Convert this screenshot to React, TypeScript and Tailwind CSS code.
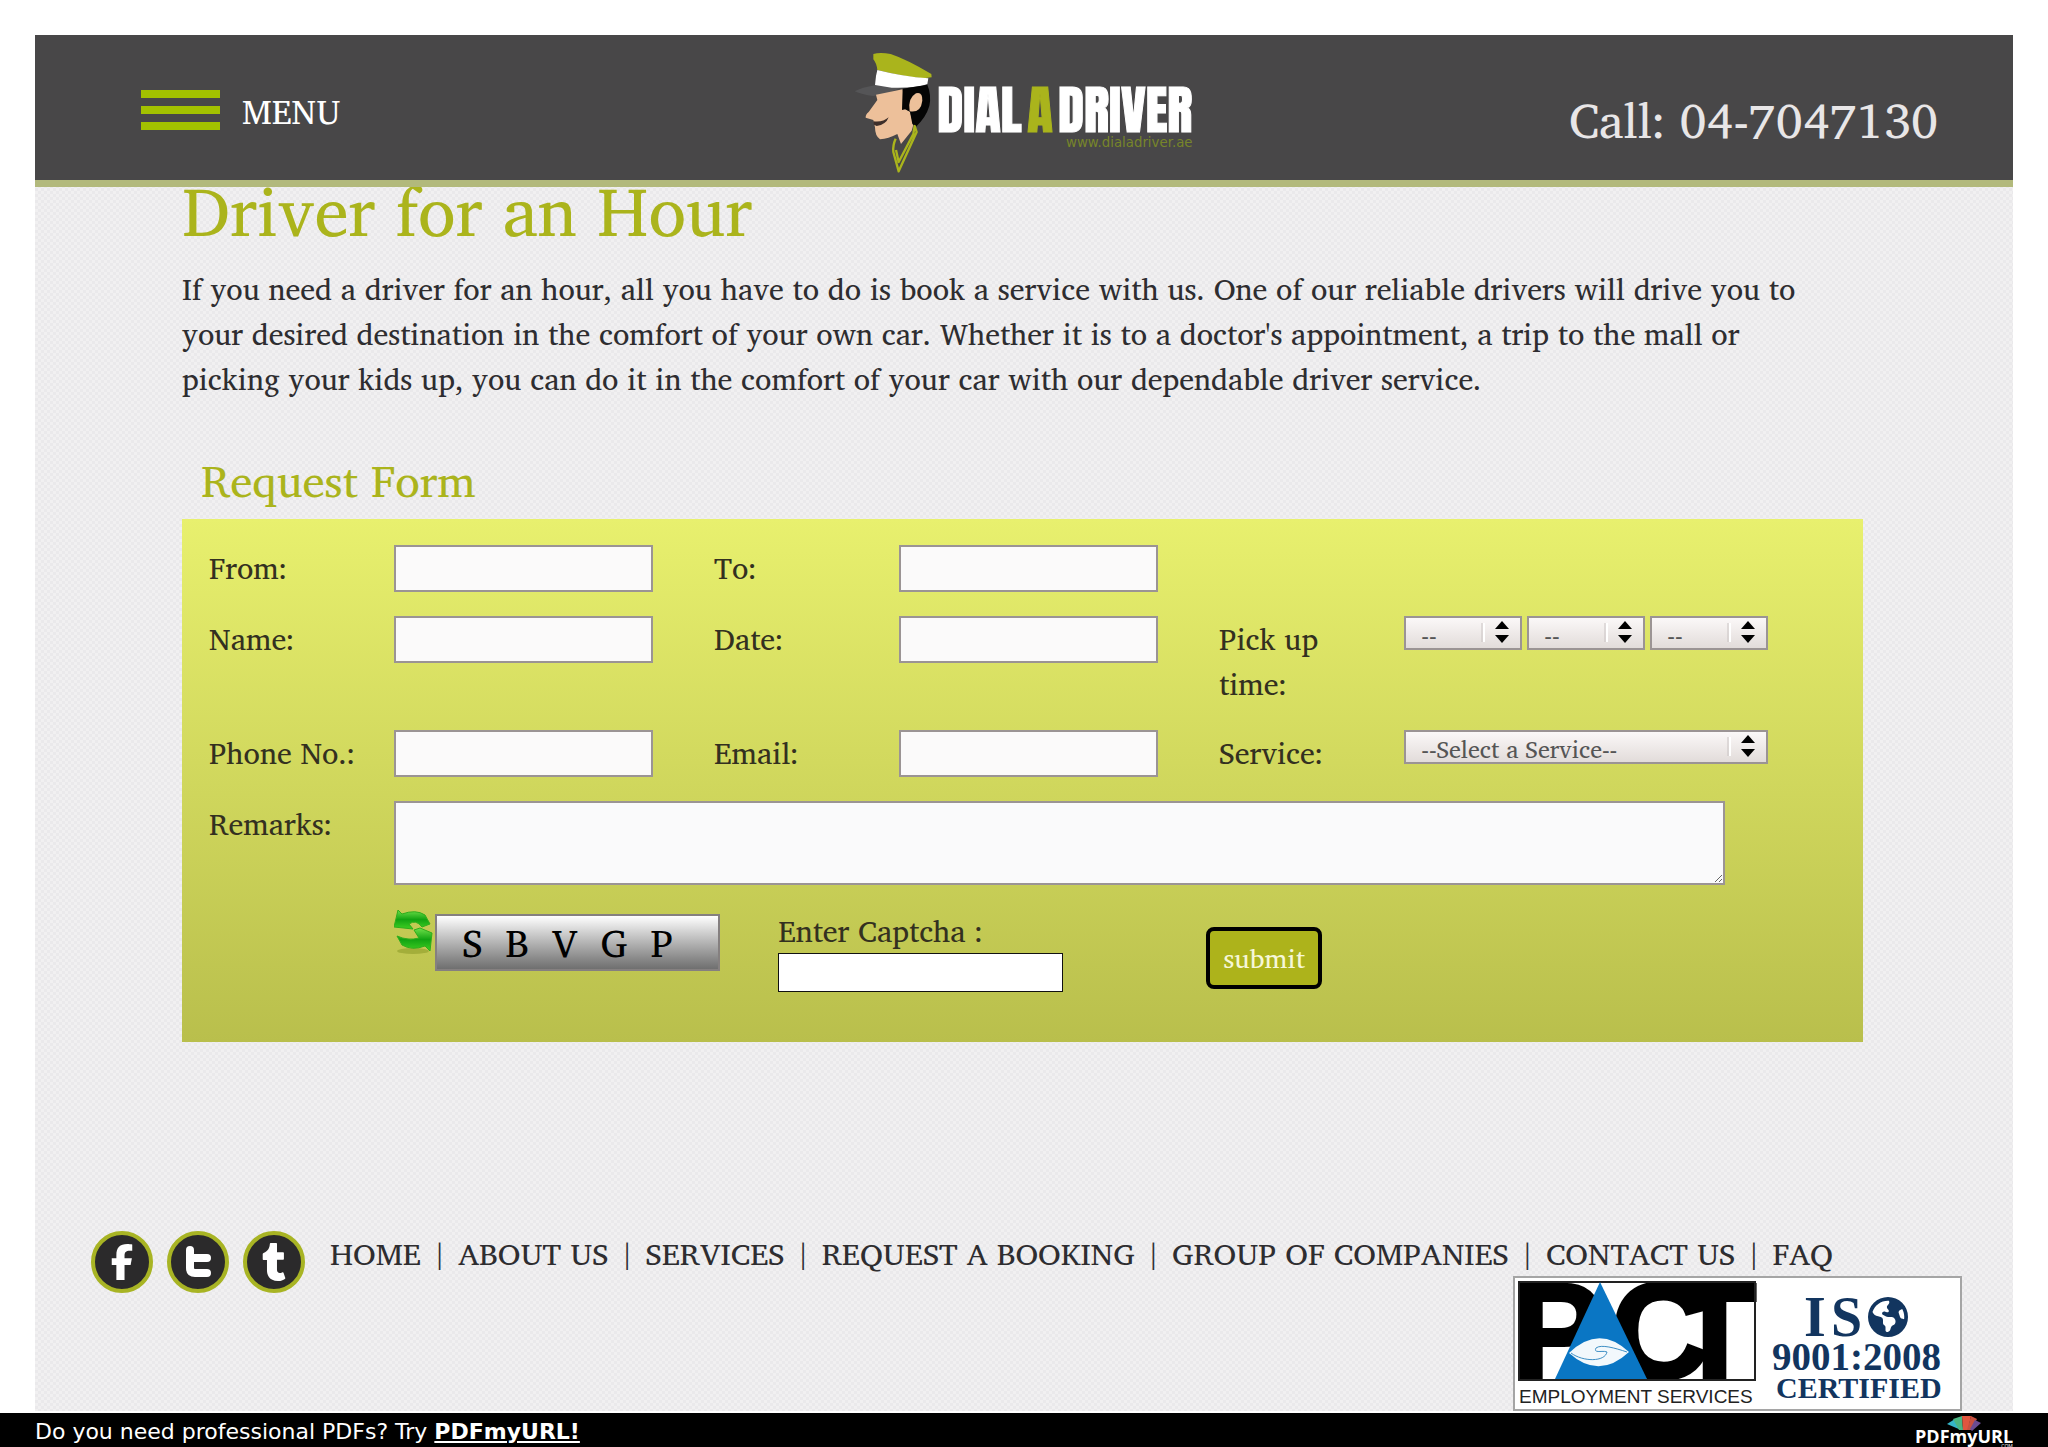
import { FaFacebookF, FaTumblr, FaEarthAmericas } from "react-icons/fa6"

const nav_links = ["HOME", "ABOUT US", "SERVICES", "REQUEST A BOOKING", "GROUP OF COMPANIES", "CONTACT US", "FAQ"]

const label_style = "text-[30px] leading-[45px]"
const input_style = "h-[47px] w-[259px] border-2 border-[#9b9494] bg-[#fbfafa] px-2 text-2xl"

function Logo() {
  return (
    <svg viewBox="84 15 1056 435" className="h-[145px] w-[352px]" role="img" aria-label="Dial A Driver">
      <path d="M104 184Q125 172 165 166L248 170Q205 192 160 198Q125 194 104 184Z" fill="#555557" />
      <path d="M160 72Q180 66 212 72Q260 88 334 132L335 142L310 145Q250 140 172 120Q170 100 160 88Z" fill="#aab41c" />
      <path d="M172 120Q250 140 325 145L322 162Q290 175 215 173L165 165L168 138Z" fill="#fff" />
      <path d="M168 194L248 178L256 238L270 245L280 284L275 302L243 342L232 312Q205 326 180 328Q165 318 165 292L160 270L137 263Q136 254 146 246L172 210Z" fill="#edc09a" />
      <path d="M248 176L322 164Q335 195 328 228Q318 262 288 290L277 282L270 245L256 238L246 240Z" fill="#050505" />
      <path d="M269 244Q262 205 288 190Q308 184 307 212Q302 250 269 244Z" fill="#edc09a" />
      <path d="M160 274Q188 278 206 262Q198 284 170 288L162 284Z" fill="#3e2f2a" />
      <path d="M227 326Q218 345 220 366L236 424L290 306L284 288L280 312L236 396L228 360" fill="none" stroke="#aab41c" strokeWidth="7" strokeLinejoin="round" />
      <g className="font-['Anton',sans-serif]" fontSize="158" fill="#fff" stroke="#fff" strokeWidth="3">
        <text x="352" y="305">DIAL</text>
        <text x="622" y="305" fill="#aab41c" stroke="#aab41c">A</text>
        <text x="714" y="305">DRIVER</text>
      </g>
      <text x="738" y="350" fontSize="40" className="font-['DejaVu_Sans',sans-serif]" fill="#77852a">www.dialadriver.ae</text>
    </svg>
  )
}

function Badge() {
  return (
    <svg viewBox="0 0 449 135" className="h-[135px] w-[449px]" role="img" aria-label="Pact Employment Services, ISO 9001:2008 certified">
      <rect x="1" y="1" width="447" height="133" fill="#fff" stroke="#a5a5a5" strokeWidth="2" />
      <g className="font-['Liberation_Sans',sans-serif] font-bold" fontSize="136" fill="#000" stroke="#000" strokeWidth="4">
        <text x="-1" y="102">P</text>
        <text x="98" y="102">C</text>
        <text x="160" y="102">T</text>
      </g>
      <rect x="6" y="6" width="236" height="98" fill="none" stroke="#222" strokeWidth="2" />
      <path d="M87 6L134 103H42Z" fill="#0a76c4" />
      <path d="M56 77Q86 48 116 76Q86 104 56 77Z" fill="#f2f8fc" />
      <path d="M58 77C70 86 92 86 94 76C90 74 80 78 83 72C88 68 102 72 114 76" fill="none" stroke="#3d8ec4" />
      <text x="6" y="127" fontSize="19" className="font-['Liberation_Sans',sans-serif]" fill="#222">EMPLOYMENT SERVICES</text>
      <g className="font-['Liberation_Serif',serif] font-bold" fill="#12355f">
        <text x="291" y="60" fontSize="56">I</text>
        <text x="318" y="60" fontSize="56">S</text>
        <text x="259" y="94" fontSize="39">9001:2008</text>
        <text x="263" y="122" fontSize="30">CERTIFIED</text>
      </g>
      <FaEarthAmericas x="355" y="21" size="40" color="#12355f" />
    </svg>
  )
}

function PdfLogo() {
  return (
    <svg viewBox="0 0 98 35" className="h-[35px] w-[98px]" role="img" aria-label="PDFmyURL.com">
      <path d="M32 10L40 5L46 16Z" fill="#35b5c8" />
      <path d="M38 5L47 2L48 16H44Z" fill="#4bb582" />
      <path d="M47 2H56L53 16H48Z" fill="#e0563f" />
      <path d="M56 2L62 5L56 16H52Z" fill="#c9503f" />
      <path d="M60 6L66 9L57 17L55 15Z" fill="#6a4c93" />
      <text x="0" y="29" fontSize="18" className="font-['Open_Sans',sans-serif] font-bold" fill="#fff">PDFmyURL</text>
      <text x="85" y="34" fontSize="5" className="font-['Open_Sans',sans-serif]" fill="#fff">.COM</text>
    </svg>
  )
}

interface select_props {
  id: string,
  label?: string,
  text: string,
  width: string,
}

function Select({ id, label, text, width }: select_props) {
  return (
    <div className={`relative h-[34px] ${width}`}>
      <select id={id} aria-label={label} className="block size-full appearance-none border-2 border-[#9b9494] bg-linear-to-b from-[#fbf8f8] to-[#e2dcda] pt-1 pl-[15px] text-[24px] leading-[26px] text-[#555]">
        <option>{text}</option>
      </select>
      <svg viewBox="0 0 28 24" className="pointer-events-none absolute top-1 right-[13px] h-6 w-7">
        <path d="M1 3V22" stroke="#c9c3c3" strokeWidth="1" />
        <path d="M3 3V22" stroke="#fff" strokeWidth="2" />
        <path d="M21 1L28 9H14ZM14 15H28L21 23Z" fill="#000" />
      </svg>
    </div>
  )
}

function Field({ id, label }: { id: string, label: string }) {
  return (
    <>
      <label htmlFor={id} className={label_style}>{label}</label>
      <input id={id} type="text" className={input_style} />
    </>
  )
}

function RequestForm() {
  return (
    <form className="mt-[14px] grid grid-cols-[44fr_76fr_44fr_76fr_44fr_109fr] items-start gap-y-6 bg-linear-to-b from-[#e8f06e] to-[#b9bf4c] pt-[26px] pb-[50px] pl-[27px] text-[#333020]">
      <Field id="from" label="From:" />
      <Field id="to" label="To:" />
      <div className="col-span-2"></div>
      <Field id="name" label="Name:" />
      <Field id="date" label="Date:" />
      <label htmlFor="hour" className={`${label_style} w-[120px]`}>Pick up time:</label>
      <div className="flex gap-[5px]">
        <Select id="hour" text="--" width="w-[118px]" />
        <Select id="minute" label="Minutes" text="--" width="w-[118px]" />
        <Select id="period" label="AM or PM" text="--" width="w-[118px]" />
      </div>
      <Field id="phone" label="Phone No.:" />
      <Field id="email" label="Email:" />
      <label htmlFor="service" className={label_style}>Service:</label>
      <Select id="service" text="--Select a Service--" width="w-[364px]" />
      <label htmlFor="remarks" className={label_style}>Remarks:</label>
      <div className="col-span-5 pr-[138px]">
        <textarea id="remarks" className="block h-[84px] w-full border-2 border-[#9b9494] bg-[#fafafb] px-2 text-2xl"></textarea>
      </div>
      <div className="col-span-5 col-start-2 flex items-start">
        <button type="button" aria-label="New code" className="w-[41px]">
          <svg viewBox="0 0 40 46" className="h-[46px] w-10">
            <defs>
              <linearGradient id="leaf" x1="0" y1="0" x2="0" y2="1">
                <stop offset="0" stopColor="#6fe04a" />
                <stop offset="0.5" stopColor="#12a312" />
                <stop offset="1" stopColor="#3fcf22" />
              </linearGradient>
            </defs>
            <ellipse cx="19" cy="42" rx="16" ry="3" fill="#8f9c2c" opacity="0.6" />
            <path d="M4 1L8 5Q22 0 31 6L36 15L28 18Q22 10 15 15L19 20L0 18Z" fill="url(#leaf)" stroke="#2fae1c" />
            <path d="M20 21L26 19L38 24L36 42L31 37Q18 42 8 36L3 27Q14 32 25 29Z" fill="url(#leaf)" stroke="#2fae1c" />
          </svg>
        </button>
        <div className="mt-[5px] h-[57px] w-[285px] border-2 border-[#858080] bg-linear-to-b from-white to-[#6f6f6f] pl-[25px] text-[39px] leading-[53px] whitespace-pre text-black">S  B  V  G  P</div>
        <div className="ml-[58px] flex flex-col">
          <label htmlFor="captcha" className="text-[30px] leading-[44px]">Enter Captcha :</label>
          <input id="captcha" type="text" className="h-[39px] w-[285px] border border-[#111] bg-white px-2 text-2xl" />
        </div>
        <button type="submit" className="mt-[18px] ml-[143px] h-[62px] w-[116px] rounded-lg border-4 border-black bg-[#adb31b] text-[27px] leading-[45px] text-[#f6f7d8]">submit</button>
      </div>
    </form>
  )
}

export default function App() {
  return (
    <div className="bg-white pt-[35px] font-['Charis_SIL','Liberation_Serif',serif] text-[#2e2d30]">
      <div className="mx-[35px] mb-0.5 bg-[repeating-conic-gradient(#eae9eb_0_25%,#f1f0f1_0_50%)] bg-[length:6px_6px]">
        <header className="relative z-10 grid grid-cols-[1fr_auto_1fr] items-center border-b-[7px] border-[#b2b97c] bg-[#484748]">
          <button type="button" className="flex items-center gap-[22px] pt-1 pl-[106px] text-[34px] leading-[45px] text-white">
            <span className="flex flex-col gap-2">
              <span className="h-2 w-[79px] bg-[#a3c100]"></span>
              <span className="h-2 w-[79px] bg-[#a3c100]"></span>
              <span className="h-2 w-[79px] bg-[#a3c100]"></span>
            </span>
            <span className="pt-1">MENU</span>
          </button>
          <Logo />
          <p className="pt-6 pr-[75px] text-right text-[48px] leading-[72px] text-[#e8e6e7]">Call: 04-7047130</p>
        </header>
        <main className="pr-[150px] pl-[147px]">
          <h1 className="text-[69px] leading-[46px] text-[#abb41c]">Driver for an Hour</h1>
          <p className="mt-[33px] pr-10 text-[30px] leading-[45px]">
            If you need a driver for an hour, all you have to do is book a service with us. One of our reliable drivers will drive you to
            your desired destination in the comfort of your own car. Whether it is to a doctor's appointment, a trip to the mall or
            picking your kids up, you can do it in the comfort of your car with our dependable driver service.
          </p>
          <h2 className="mt-[54px] pl-[19px] text-[45px] leading-[50px] text-[#abb41c]">Request Form</h2>
          <RequestForm />
        </main>
        <footer className="mt-[189px] flex items-start pr-[51px] pl-14">
          <div className="flex gap-[14px]">
            <a href="#" aria-label="Facebook" className="flex size-[62px] items-center justify-center rounded-full border-4 border-[#a8b424] bg-[#2b2a2b] text-white">
              <FaFacebookF size={36} />
            </a>
            <a href="#" aria-label="Twitter" className="flex size-[62px] items-center justify-center rounded-full border-4 border-[#a8b424] bg-[#2b2a2b] text-white">
              <svg viewBox="0 0 26 34" className="h-[34px] w-[26px]">
                <path d="M5 5V23Q5 28 10 28H22M5 13H22" fill="none" stroke="currentColor" strokeWidth="8" strokeLinecap="round" />
              </svg>
            </a>
            <a href="#" aria-label="Tumblr" className="flex size-[62px] items-center justify-center rounded-full border-4 border-[#a8b424] bg-[#2b2a2b] text-white">
              <FaTumblr size={38} />
            </a>
          </div>
          <div className="flex grow flex-col pl-[25px]">
            <nav className="flex gap-[14px] text-[31px] leading-[45px] whitespace-nowrap">
              {nav_links.map((link, i) => (
                <span key={link} className="flex gap-[14px]">
                  {i > 0 && <span className="text-[26px]">|</span>}
                  <a href="#">{link}</a>
                </span>
              ))}
            </nav>
            <div className="self-end">
              <Badge />
            </div>
          </div>
        </footer>
      </div>
      <div className="flex h-9 items-center justify-between bg-black px-[35px] font-['Verdana','DejaVu_Sans',sans-serif] text-[22px] text-white">
        <p>Do you need professional PDFs? Try <a href="#" className="font-bold underline">PDFmyURL!</a></p>
        <PdfLogo />
      </div>
    </div>
  )
}
